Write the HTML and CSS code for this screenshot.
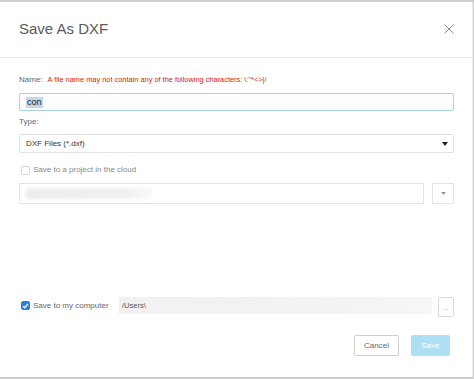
FILE: index.html
```html
<!DOCTYPE html>
<html>
<head>
<meta charset="utf-8">
<link rel="stylesheet" href="styles.css">
</head>
<body>
<div class="dialog">
  <div class="header">
    <h1 class="title">Save As DXF</h1>
    <svg class="close" width="10" height="10" viewBox="0 0 10 10"><path d="M0.5 0.5L9.5 9.5M9.5 0.5L0.5 9.5" stroke="#8c8c8c" stroke-width="1" fill="none"/></svg>
  </div>
  <div class="content">
    <div class="label name-label">Name:<span class="error">A file name may not contain any of the following characters: \:"*&lt;&gt;|/</span></div>
    <div class="input name-input"><span class="sel">con</span></div>
    <div class="label type-label">Type:</div>
    <div class="select">
      <span>DXF Files (*.dxf)</span>
      <svg width="6" height="4" viewBox="0 0 6 4"><path d="M0 0H6L3 4Z" fill="#222"/></svg>
    </div>
    <div class="check-row cloud-row">
      <span class="box"></span>
      <span class="muted">Save to a project in the cloud</span>
    </div>
    <div class="cloud">
      <div class="input cloud-input"><span class="blur"></span></div>
      <div class="drop"><svg width="5" height="3" viewBox="0 0 5 3"><path d="M0 0H5L2.5 3Z" fill="#999"/></svg></div>
    </div>
    <div class="computer">
      <div class="check-row">
        <span class="box checked"><svg width="8" height="8" viewBox="0 0 8 8"><path d="M1.3 4.2L3.2 6L6.8 1.6" stroke="#fff" stroke-width="1.5" fill="none"/></svg></span>
        <span class="dark">Save to my computer</span>
      </div>
      <div class="path"><span>/Users\</span><span class="blur2"></span></div>
      <div class="dots">...</div>
    </div>
    <div class="actions">
      <div class="btn cancel">Cancel</div>
      <div class="btn save">Save</div>
    </div>
  </div>
</div>
</body>
</html>
```

FILE: styles.css
```css
* { box-sizing: border-box; }
html, body { margin: 0; padding: 0; }
body {
  background: #d0d0d0;
  font-family: "Liberation Sans", Arial, sans-serif;
  width: 474px;
  height: 379px;
  overflow: hidden;
}
.dialog {
  margin-top: 2px;
  width: 472px;
  height: 375px;
  background: #fff;
  display: flex;
  flex-direction: column;
  box-shadow: 1px 0 0 #ececec;
}
.header {
  height: 56px;
  border-bottom: 1px solid #e6e6e6;
  display: flex;
  align-items: center;
  justify-content: space-between;
  padding: 0 18px 2px 19px;
}
.title {
  margin: 0;
  font-size: 15px;
  font-weight: normal;
  color: #5a5a5a;
}
.content {
  padding: 0 18px 0 19px;
  display: flex;
  flex-direction: column;
}
.label {
  font-size: 8px;
  line-height: 10px;
  color: #666;
}
.name-label { margin-top: 17px; }
.error { color: #d42020; margin-left: 5px; font-size: 7.4px; }
.input {
  border: 1px solid #ddd;
  background: #fff;
  font-size: 8px;
  display: flex;
  align-items: center;
}
.name-input {
  margin-top: 8px;
  height: 18px;
  border-color: #a9d3df;
  border-radius: 2px;
  padding-left: 6px;
  background: #fdfdfd;
}
.sel {
  background: #c6d7ea;
  color: #222;
  font-size: 9px;
  line-height: 11px;
  padding: 0 1px;
}
.type-label { margin-top: 6px; }
.select {
  margin-top: 7px;
  height: 19px;
  border: 1px solid #e2e2e2;
  border-radius: 1px;
  display: flex;
  align-items: center;
  justify-content: space-between;
  padding: 0 5px 0 6px;
  font-size: 8px;
  color: #333;
}
.check-row {
  display: flex;
  align-items: center;
  font-size: 8px;
  line-height: 10px;
}
.cloud-row { margin-top: 12px; padding-left: 2px; }
.box {
  width: 9px;
  height: 9px;
  border: 1px solid #d6d6d6;
  border-radius: 2px;
  margin-right: 3px;
  display: inline-flex;
  align-items: center;
  justify-content: center;
}
.box.checked {
  background: #2f7fd9;
  border-color: #2f7fd9;
}
.muted { color: #888; }
.dark { color: #666; }
.cloud {
  margin-top: 8px;
  display: flex;
  gap: 8px;
  height: 21px;
}
.cloud-input {
  flex: 1;
  border-color: #e4e4e4;
  padding-left: 6px;
}
.blur {
  width: 126px;
  height: 11px;
  background: linear-gradient(90deg, #ececec, #f0f0f0 80%, #fafafa);
  border-radius: 4px;
  filter: blur(1.5px);
}
.drop {
  width: 22px;
  border: 1px solid #e4e4e4;
  display: flex;
  align-items: center;
  justify-content: center;
}
.computer {
  margin-top: 93px;
  display: flex;
  align-items: flex-start;
  height: 20px;
}
.computer .check-row { width: 100px; height: 17px; padding-left: 2px; }
.path {
  width: 313px;
  height: 17px;
  background: linear-gradient(90deg, #f1f1f1, #f3f3f3 70%, #f6f6f6);
  font-size: 7.5px;
  color: #555;
  display: flex;
  align-items: center;
  padding-left: 3px;
}
.blur2 {
  width: 40px;
  height: 10px;
  background: #f3f3f3;
}
.dots {
  margin-left: 6px;
  width: 16px;
  height: 20px;
  border: 1px solid #d8d8d8;
  border-radius: 2px;
  font-size: 7px;
  color: #999;
  display: flex;
  align-items: center;
  justify-content: center;
}
.actions {
  margin-top: 18px;
  display: flex;
  justify-content: flex-end;
  padding-right: 4px;
  gap: 12px;
}
.btn {
  height: 21px;
  border-radius: 2px;
  font-size: 8px;
  display: flex;
  align-items: center;
  justify-content: center;
}
.cancel {
  width: 45px;
  border: 1px solid #cfcfcf;
  color: #666;
}
.save {
  width: 39px;
  background: #aedff5;
  color: #fff;
}
```
